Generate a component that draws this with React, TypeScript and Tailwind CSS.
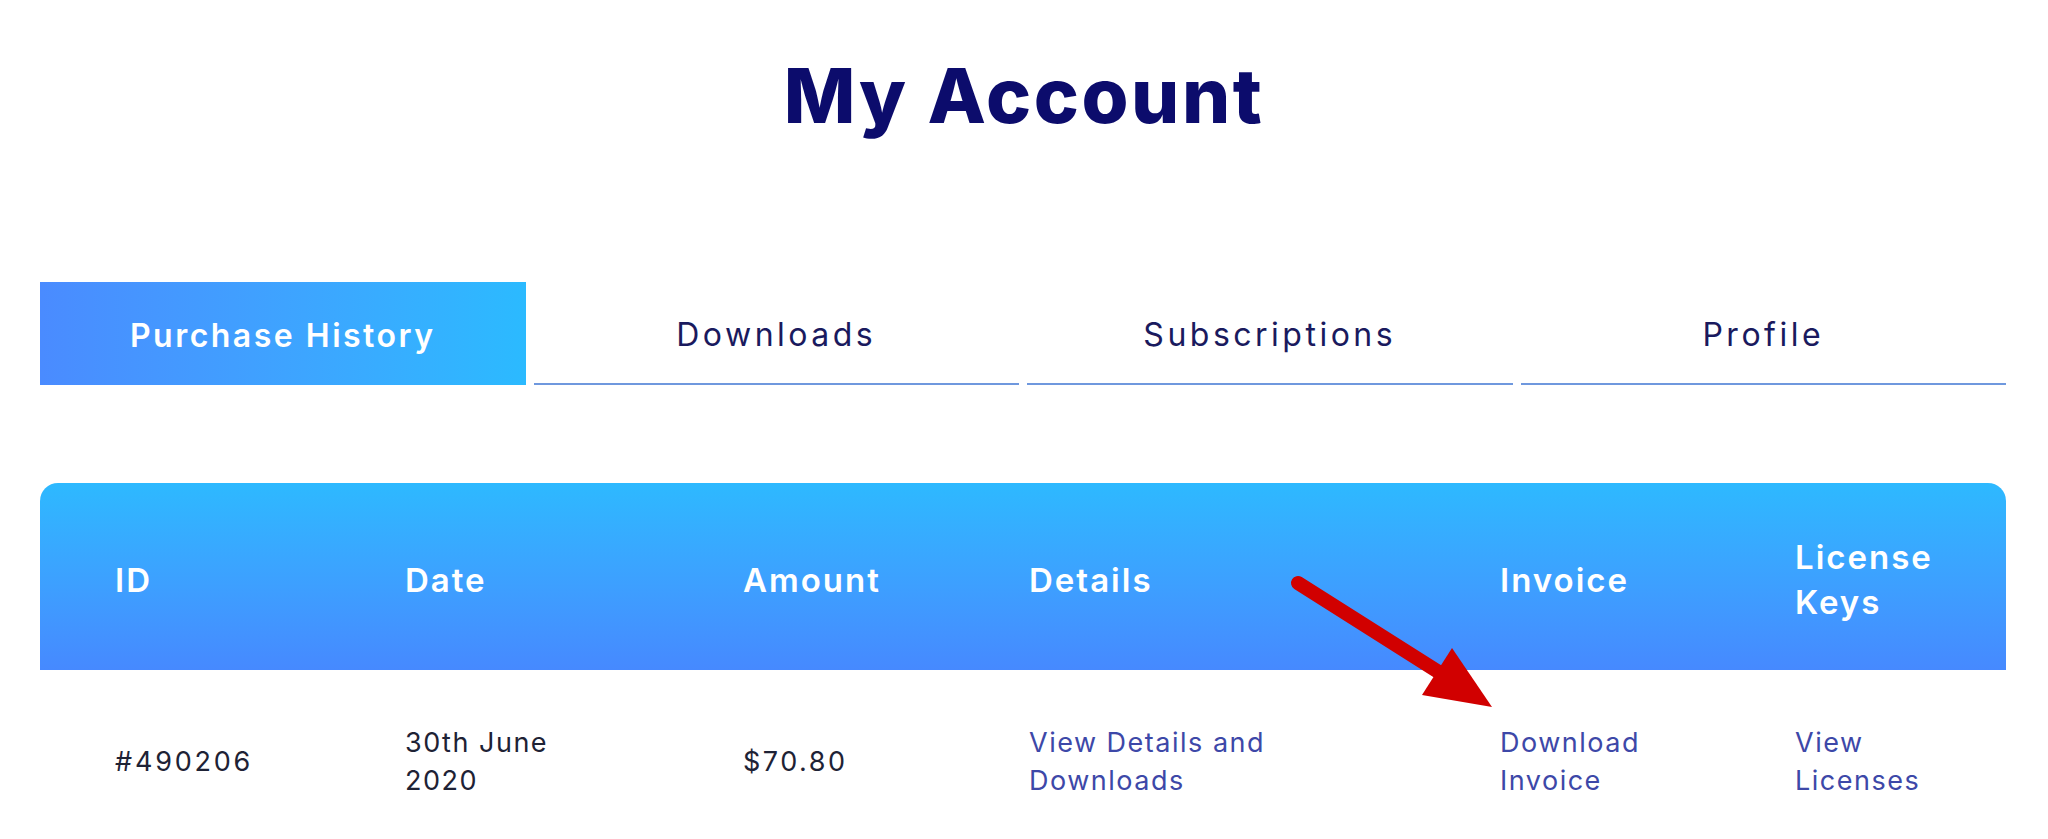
import React from "react";

const tabs = ["Purchase History", "Downloads", "Subscriptions", "Profile"];

export default function App() {
  return (
    <div className="relative w-[2048px] h-[839px] overflow-hidden bg-white font-[Inter,sans-serif]">
      <h1 className="pt-[57px] text-center text-[76px] leading-none font-extrabold tracking-[2.5px] text-[#0c0c6c]">
        My Account
      </h1>

      <div className="mt-[149px] ml-[40px] w-[1966px] grid grid-cols-4 gap-[8px] h-[103px]">
        {tabs.map((t, i) =>
          i === 0 ? (
            <div
              key={t}
              className="flex items-center justify-center pt-[4px] bg-linear-to-r from-[#4a8bff] to-[#2bbaff] text-white text-[32px] font-semibold tracking-[2.5px]"
            >
              {t}
            </div>
          ) : (
            <div
              key={t}
              className="flex items-center justify-center pt-[4px] border-b-2 border-[#6f98de] text-[#1a1a5e] text-[32px] font-normal tracking-[3.5px]"
            >
              {t}
            </div>
          )
        )}
      </div>

      <div className="mt-[98px] ml-[40px] w-[1966px]">
        <div className="h-[187px] rounded-t-[18px] bg-linear-to-b from-[#2db9ff] to-[#4689ff] grid grid-cols-[290px_338px_286px_471px_295px_1fr] pl-[75px] pt-[7px] items-center text-white text-[33px] font-semibold leading-[45px] tracking-[2px]">
          <div>ID</div>
          <div>Date</div>
          <div>Amount</div>
          <div>Details</div>
          <div>Invoice</div>
          <div>
            <span className="block">License</span>
            <span className="block">Keys</span>
          </div>
        </div>
        <div className="grid grid-cols-[290px_338px_286px_471px_295px_1fr] pl-[75px] pt-[54px] items-center text-[27px] leading-[38px] tracking-[1.5px]">
          <div className="text-[#1e2235] tracking-[2.8px]">#490206</div>
          <div className="text-[#1e2235]">
            <span className="block">30th June</span>
            <span className="block">2020</span>
          </div>
          <div className="text-[#1e2235] tracking-[2.5px]">$70.80</div>
          <div className="text-[#3d48a8]">
            <span className="block">View Details and</span>
            <span className="block">Downloads</span>
          </div>
          <div className="text-[#3d48a8]">
            <span className="block">Download</span>
            <span className="block">Invoice</span>
          </div>
          <div className="text-[#3d48a8]">
            <span className="block">View</span>
            <span className="block">Licenses</span>
          </div>
        </div>
      </div>

      <svg
        className="absolute left-0 top-0 pointer-events-none"
        width="2048"
        height="839"
        viewBox="0 0 2048 839"
      >
        <line x1="1298" y1="583" x2="1437" y2="671" stroke="#d10000" strokeWidth="14" strokeLinecap="round" />
        <polygon points="1452,648 1422,695 1492,707" fill="#d10000" />
      </svg>
    </div>
  );
}
